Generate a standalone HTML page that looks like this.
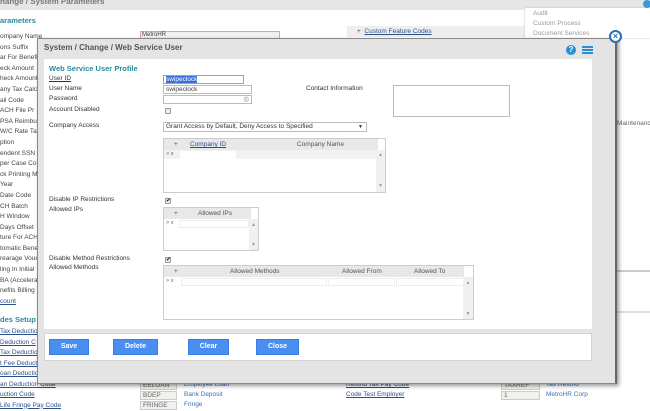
<!DOCTYPE html>
<html><head><meta charset="utf-8"><style>
*{margin:0;padding:0;box-sizing:border-box}
body{width:650px;height:410px;overflow:hidden;background:#fff;font-family:"Liberation Sans",sans-serif;font-size:6.5px;color:#444;position:relative}
.a{position:absolute;white-space:nowrap}
.lnk{color:#2a4f8a;text-decoration:underline}
.bl{color:#3a6fc0}
.box{position:absolute;border:1px solid #ccc;background:#f0f0ec;font-size:6.5px;color:#666;padding-left:2px;line-height:7px}
.lbl{position:absolute;left:49px;color:#333;font-size:6.5px;white-space:nowrap}
.inp{position:absolute;border:1px solid #bbb;background:#fff;font-size:6.5px;padding-left:2px;line-height:8px}
.cb{position:absolute;width:6px;height:6px;border:1px solid #999;background:#eee;border-radius:1px;font-size:6px;line-height:5px;text-align:center;color:#222}
.grid{position:absolute;border:1px solid #ccc;background:#fff}
.gh{position:absolute;left:0;top:0;height:11px;background:#e8e8e8;font-size:6.5px;color:#555;line-height:11px}
.sb{position:absolute;right:0;top:11px;bottom:0;width:9px;background:#f0f0f0;font-size:5px;color:#999;text-align:center}
.btn{position:absolute;top:339px;height:16px;background:#4a8ef2;border:1px solid #3a7ee2;color:#fff;font-weight:bold;font-size:7px;text-align:center;line-height:14px}
</style></head><body>
<!-- background page -->
<div class="a" style="left:0;top:0;width:650px;height:10px;background:#e6e6e6"></div>
<div class="a" style="left:0;top:-3px;font-size:8px;font-weight:bold;color:#777">hange / System Parameters</div>
<div class="a" style="left:0;top:16px;font-size:7.5px;font-weight:bold;color:#2a8a9a">arameters</div>
<div class="a" style="left:140px;top:31px;width:140px;height:8px;border:1px solid #e8a0a0;background:#f0f0ec;font-size:6px;padding-left:1px">MetroHR</div>
<div class="a" style="left:347px;top:26px;width:178px;height:11px;background:#eee;font-size:6.5px;padding-left:10px;line-height:11px">+ &nbsp;<span class="lnk">Custom Feature Codes</span></div>
<div class="a" style="left:525px;top:8px;width:125px;height:30px;background:#fff;box-shadow:0 0 2px #bbb"></div>
<div class="a" style="left:533px;top:10px;color:#999">Audit</div>
<div class="a" style="left:533px;top:20px;color:#999">Custom Process</div>
<div class="a" style="left:533px;top:30px;color:#999">Document Services</div>
<div class="a" style="left:643px;top:0;width:8px;height:8px;border-radius:4px;background:#3a9ad8"></div>
<div class="a" style="left:617px;top:120px;color:#666">Maintenanc</div>
<div class="a" style="left:617px;top:270px;width:33px;height:2px;background:#ccc"></div>
<div class="a" style="left:617px;top:311px;width:33px;height:2px;background:#ddd"></div>
<div class="a" style="left:0;top:32px;line-height:10.6px;color:#444">ompany Name<br>ons Suffix<br>ar For Benefi<br>eck Amount<br>heck Amount<br>any Tax Calc<br>ail Code<br>ACH File Pr<br>PSA Reimbur<br>W/C Rate Tab<br>ption<br>endent SSN<br>per Case Co<br>ck Printing M<br>Year<br>Date Code<br>CH Batch<br>H Window<br>Days Offset<br>ture For ACH<br>tomatic Bene<br>rearage Vouc<br>ling In Initial<br>BA (Accelera<br>nefits Billing<br><span class="lnk">count</span></div>
<div class="a" style="left:0;top:315px;font-size:7.5px;font-weight:bold;color:#2a8a9a">des Setup</div>
<div class="a lnk" style="left:0;top:327px;line-height:10.5px">Tax Deduction<br> Deduction C<br>Tax Deduction<br>t Fee Deduct<br>oan Deduction<br>an Deduction Code<br>uction Code<br>Life Fringe Pay Code</div>
<div class="box" style="left:140px;top:381px;width:37px;height:9px">EELOAN</div>
<div class="box" style="left:140px;top:391px;width:37px;height:9px">BDEP</div>
<div class="box" style="left:140px;top:401px;width:37px;height:9px">FRINGE</div>
<div class="a bl" style="left:184px;top:381px">Employee Loan</div>
<div class="a bl" style="left:184px;top:391px">Bank Deposit</div>
<div class="a bl" style="left:184px;top:401px">Fringe</div>
<div class="a lnk" style="left:346px;top:381px">Refund Tax Pay Code</div>
<div class="a lnk" style="left:346px;top:391px">Code Test Employer</div>
<div class="box" style="left:501px;top:381px;width:39px;height:9px">TAXREF</div>
<div class="box" style="left:501px;top:391px;width:39px;height:9px">1</div>
<div class="a bl" style="left:546px;top:381px">Tax Refund</div>
<div class="a bl" style="left:546px;top:391px">MetroHR Corp</div>

<!-- modal -->
<div class="a" style="left:37px;top:38px;width:580px;height:346px;background:#e4e4e4;border:1px solid #888;border-right:2px solid #666;box-shadow:2px 2px 4px rgba(0,0,0,.4)"></div>
<div class="a" style="left:44px;top:43px;font-size:8px;font-weight:bold;color:#555">System / Change / Web Service User</div>
<div class="a" style="left:566px;top:45px;width:10px;height:10px;border-radius:5px;background:#2a8fd0;color:#fff;font-size:8px;font-weight:bold;text-align:center;line-height:10px">?</div>
<div class="a" style="left:582px;top:46px;width:11px;height:2px;background:#2a8fd0;box-shadow:0 3px 0 #2a8fd0,0 6px 0 #2a8fd0"></div>
<div class="a" style="left:609px;top:30px;width:13px;height:13px;border-radius:7px;background:#fff;border:2px solid #2a6fb0;color:#2a6fb0;font-size:9px;font-weight:bold;text-align:center;line-height:9px">×</div>
<div class="a" style="left:44px;top:59px;width:548px;height:270px;background:#fff"></div>
<div class="a" style="left:44px;top:333px;width:548px;height:28px;background:#fff;border:1px solid #d4d4d4"></div>

<div class="a" style="left:49px;top:64px;font-size:7.5px;font-weight:bold;color:#2a8a9a">Web Service User Profile</div>
<div class="lbl lnk" style="top:75px">User ID</div>
<div class="lbl" style="top:85px">User Name</div>
<div class="lbl" style="top:95px">Password</div>
<div class="lbl" style="top:106px">Account Disabled</div>
<div class="lbl" style="top:122px">Company Access</div>
<div class="lbl" style="top:196px">Disable IP Restrictions</div>
<div class="lbl" style="top:206px">Allowed IPs</div>
<div class="lbl" style="top:255px">Disable Method Restrictions</div>
<div class="lbl" style="top:264px">Allowed Methods</div>

<div class="inp" style="left:163px;top:75px;width:81px;height:9px;border-color:#7aaae8"><span style="background:#3a6fd8;color:#fff">swipeclock</span></div>
<div class="inp" style="left:163px;top:85px;width:89px;height:9px">swipeclock</div>
<div class="inp" style="left:163px;top:95px;width:89px;height:9px"><span style="position:absolute;right:2px;top:0;color:#777">◎</span></div>
<div class="cb" style="left:165px;top:108px"></div>
<div class="a" style="left:306px;top:85px;color:#333">Contact Information</div>
<div class="a" style="left:393px;top:85px;width:117px;height:32px;border:1px solid #bbb"></div>
<div class="inp" style="left:163px;top:122px;width:204px;height:10px;color:#333">Grant Access by Default, Deny Access to Specified<span style="position:absolute;right:3px;top:0;font-size:5px">▼</span></div>

<div class="grid" style="left:163px;top:138px;width:223px;height:55px">
 <div class="gh" style="width:214px"><span class="a" style="left:10px">+</span><span class="a lnk" style="left:26px">Company ID</span><span class="a" style="left:133px">Company Name</span></div>
 <div class="a" style="left:0;top:11px;width:214px;height:9px;background:#f2f2f2"></div>
 <div class="a" style="left:16px;top:12px;width:56px;height:8px;background:#fff"></div>
 <div class="a" style="left:2px;top:12px;font-size:5.5px;color:#666">&gt; x</div>
 <div class="sb"><div style="margin-top:2px">▲</div><div style="margin-top:25px">▼</div></div>
</div>
<div class="cb" style="left:165px;top:198px">✔</div>
<div class="grid" style="left:163px;top:207px;width:96px;height:44px">
 <div class="gh" style="width:87px"><span class="a" style="left:10px">+</span><span class="a" style="left:34px">Allowed IPs</span></div>
 <div class="a" style="left:15px;top:12px;width:70px;height:8px;background:#fff;border:1px solid #eee"></div>
 <div class="a" style="left:2px;top:12px;font-size:5.5px;color:#666">&gt; x</div>
 <div class="sb"><div style="margin-top:3px">▲</div><div style="margin-top:14px">▼</div></div>
</div>
<div class="cb" style="left:165px;top:257px">✔</div>
<div class="grid" style="left:163px;top:265px;width:311px;height:55px">
 <div class="gh" style="width:300px"><span class="a" style="left:10px">+</span><span class="a" style="left:66px">Allowed Methods</span><span class="a" style="left:178px">Allowed From</span><span class="a" style="left:250px">Allowed To</span></div>
 <div class="a" style="left:17px;top:12px;width:146px;height:8px;border:1px solid #eee"></div>
 <div class="a" style="left:164px;top:12px;width:67px;height:8px;border:1px solid #eee"></div>
 <div class="a" style="left:232px;top:12px;width:68px;height:8px;border:1px solid #eee"></div>
 <div class="a" style="left:2px;top:12px;font-size:5.5px;color:#666">&gt; x</div>
 <div class="sb" style="width:10px"><div style="margin-top:3px">▲</div><div style="margin-top:25px">▼</div></div>
</div>

<div class="btn" style="left:49px;width:40px">Save</div>
<div class="btn" style="left:113px;width:45px">Delete</div>
<div class="btn" style="left:188px;width:41px">Clear</div>
<div class="btn" style="left:256px;width:43px">Close</div>
</body></html>
